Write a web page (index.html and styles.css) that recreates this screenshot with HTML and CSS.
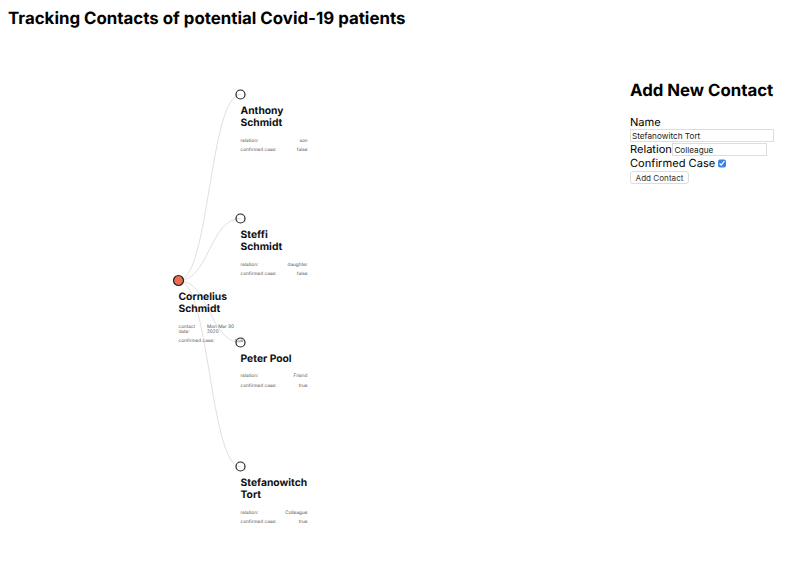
FILE: index.html
```html
<!DOCTYPE html>
<html lang="en">
  <head>
    <meta charset="UTF-8" />
    <title>Tracking Contacts</title>
    <link rel="stylesheet" href="styles.css">
  </head>
  <body>
    <h1 class="title">Tracking Contacts of potential Covid-19 patients</h1>
    <div class="content">
      <div class="tree">
        <svg class="links" width="620" height="530">
          <path d="M178.5 280.5 C209.5 280.5 209.5 94.5 240.5 94.5" />
          <path d="M178.5 280.5 C209.5 280.5 209.5 218.5 240.5 218.5" />
          <path d="M178.5 280.5 C209.5 280.5 209.5 342.5 240.5 342.5" />
          <path d="M178.5 280.5 C209.5 280.5 209.5 466.5 240.5 466.5" />
          <circle class="root-dot" cx="178.5" cy="280.5" r="5" />
          <circle class="dot" cx="240.5" cy="94.5" r="4.5" />
          <circle class="dot" cx="240.5" cy="218.5" r="4.5" />
          <circle class="dot" cx="240.5" cy="342.5" r="4.5" />
          <circle class="dot" cx="240.5" cy="466.5" r="4.5" />
        </svg>

        <div class="node root">
          <h3>Cornelius Schmidt</h3>
          <table>
            <tr><td class="key">contact date:</td><td class="date">Mon Mar 30 2020</td></tr>
            <tr><td class="nowrap">confirmed case:</td><td class="val">true</td></tr>
          </table>
        </div>
        <div class="node n1">
          <h3>Anthony Schmidt</h3>
          <table>
            <tr><td>relation:</td><td class="val">son</td></tr>
            <tr><td>confirmed case:</td><td class="val">false</td></tr>
          </table>
        </div>
        <div class="node n2">
          <h3>Steffi Schmidt</h3>
          <table>
            <tr><td>relation:</td><td class="val">daughter</td></tr>
            <tr><td>confirmed case:</td><td class="val">false</td></tr>
          </table>
        </div>
        <div class="node n3">
          <h3>Peter Pool</h3>
          <table>
            <tr><td>relation:</td><td class="val">Friend</td></tr>
            <tr><td>confirmed case:</td><td class="val">true</td></tr>
          </table>
        </div>
        <div class="node n4">
          <h3>Stefanowitch Tort</h3>
          <table>
            <tr><td>relation:</td><td class="val">Colleague</td></tr>
            <tr><td>confirmed case:</td><td class="val">true</td></tr>
          </table>
        </div>
      </div>

      <form class="add-form">
        <h2>Add New Contact</h2>
        <label class="name-label" for="name">Name</label>
        <input class="name-input" id="name" type="text" value="Stefanowitch Tort">
        <div class="row">
          <label for="relation">Relation</label>
          <input class="relation-input" id="relation" type="text" value="Colleague">
        </div>
        <div class="row">
          <label for="confirmed">Confirmed Case</label>
          <input class="check" id="confirmed" type="checkbox" checked>
        </div>
        <button class="add-btn" type="button">Add Contact</button>
      </form>
    </div>
  </body>
</html>
```

FILE: styles.css
```css
* {
  margin: 0;
  padding: 0;
  box-sizing: border-box;
}

body {
  font-family: Inter, "Liberation Sans", sans-serif;
  color: #000;
  background-color: #fff;
  padding: 9px 8px 0;
  text-rendering: geometricPrecision;
}

.title {
  font-size: 16.85px;
  line-height: 21px;
  font-weight: 700;
}

.content {
  display: flex;
  margin-left: -8px;
}

/* the tree is a free canvas, nodes sit where the layout puts them */
.tree {
  position: relative;
  width: 630px;
  height: 530px;
  margin-top: -30px;
  flex: none;
}

.links {
  position: absolute;
  left: 0;
  top: 0;
}

.links path {
  fill: none;
  stroke: #e0e0e0;
  stroke-width: 1;
}

.dot {
  fill: none;
  stroke: #222;
  stroke-width: 1.2;
}

.root-dot {
  fill: #ee6a50;
  stroke: #222;
  stroke-width: 1.2;
}

.node {
  position: absolute;
  width: 67px;
}

.root {
  left: 178.5px;
  top: 290.5px;
  width: 65px;
}

.n1 { left: 240.5px; top: 104.5px; }
.n2 { left: 240.5px; top: 228.5px; }
.n3 { left: 240.5px; top: 352.5px; }
.n4 { left: 240.5px; top: 476.5px; }

.node h3 {
  font-size: 10.3px;
  line-height: 12.3px;
  font-weight: 700;
  color: #111;
}

.node table {
  width: 100%;
  margin-top: 7.5px;
  border-collapse: collapse;
  font-size: 4.7px;
  line-height: 5.2px;
  color: #555;
}

.node td {
  padding: 2.15px 0;
  vertical-align: top;
}

.node td.val {
  text-align: right;
}

.root table {
  table-layout: fixed;
}

.root td:first-child {
  width: 28.5px;
}

.node td.key {
  padding-right: 6px;
}

.node td.date {
  padding-right: 8px;
}

.node td.nowrap {
  white-space: nowrap;
}

.add-form {
  padding-top: 50.5px;
  width: 170px;
}

.add-form h2 {
  font-size: 16.8px;
  line-height: 21px;
  font-weight: 700;
  margin-bottom: 14px;
}

.add-form label {
  font-size: 11.1px;
  line-height: 13.5px;
}

.name-label {
  display: block;
}

.add-form input[type="text"] {
  font-family: Inter, "Liberation Sans", sans-serif;
  font-size: 8.2px;
  height: 13px;
  border: 1px solid #ddd;
  padding: 0 1px;
  color: #222;
  outline: none;
}

.name-input {
  display: block;
  width: 144px;
}

.row {
  display: flex;
  align-items: center;
  height: 13px;
  margin-top: 1px;
}

.relation-input {
  width: 95px;
  margin-left: 0.5px;
}

.check {
  width: 8.5px;
  height: 8.5px;
  margin-left: 2.5px;
  accent-color: #3b82e6;
}

.add-btn {
  display: block;
  width: 59px;
  height: 13px;
  margin-top: 1px;
  font-family: Inter, "Liberation Sans", sans-serif;
  font-size: 8.1px;
  color: #333;
  background-color: #fff;
  border: 1px solid #ddd;
  border-radius: 3px;
}
```
